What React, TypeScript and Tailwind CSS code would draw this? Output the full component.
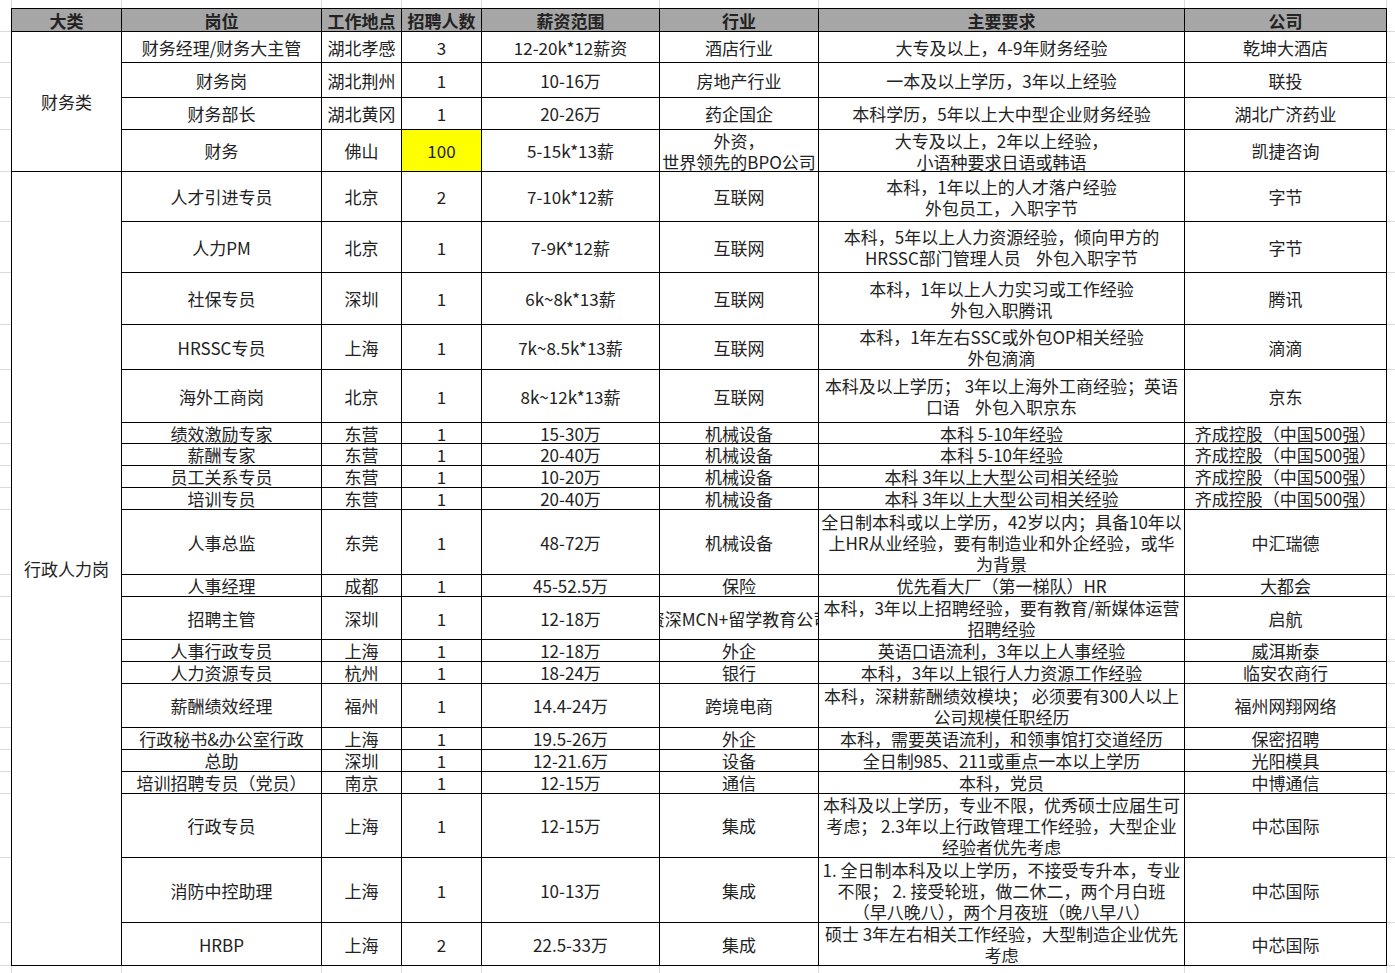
import clsx from 'clsx'

type Row = {
    pos: string
    city: string
    num: string
    pay: string
    ind: string
    req: string
    co: string
    hl?: boolean
}

// row heights of the sheet (header + 25 data rows)
const ROWS_TPL =
    'grid-rows-[22px_30px_34px_31px_41px_49px_50px_51px_44px_52px_20px_21px_21px_21px_64px_21px_42px_21px_21px_43px_21px_21px_21px_63px_64px_42px]'

const HEAD = ['大类', '岗位', '工作地点', '招聘人数', '薪资范围', '行业', '主要要求', '公司']

const FINANCE: Row[] = [
    { pos: '财务经理/财务大主管', city: '湖北孝感', num: '3', pay: '12-20k*12薪资', ind: '酒店行业', req: '大专及以上，4-9年财务经验', co: '乾坤大酒店' },
    { pos: '财务岗', city: '湖北荆州', num: '1', pay: '10-16万', ind: '房地产行业', req: '一本及以上学历，3年以上经验', co: '联投' },
    { pos: '财务部长', city: '湖北黄冈', num: '1', pay: '20-26万', ind: '药企国企', req: '本科学历，5年以上大中型企业财务经验', co: '湖北广济药业' },
    { pos: '财务', city: '佛山', num: '100', pay: '5-15k*13薪', ind: '外资，\n世界领先的BPO公司', req: '大专及以上，2年以上经验，\n小语种要求日语或韩语', co: '凯捷咨询', hl: true },
]

const HR: Row[] = [
    { pos: '人才引进专员', city: '北京', num: '2', pay: '7-10k*12薪', ind: '互联网', req: '本科，1年以上的人才落户经验\n外包员工，入职字节', co: '字节' },
    { pos: '人力PM', city: '北京', num: '1', pay: '7-9K*12薪', ind: '互联网', req: '本科，5年以上人力资源经验，倾向甲方的\nHRSSC部门管理人员    外包入职字节', co: '字节' },
    { pos: '社保专员', city: '深圳', num: '1', pay: '6k~8k*13薪', ind: '互联网', req: '本科，1年以上人力实习或工作经验\n外包入职腾讯', co: '腾讯' },
    { pos: 'HRSSC专员', city: '上海', num: '1', pay: '7k~8.5k*13薪', ind: '互联网', req: '本科，1年左右SSC或外包OP相关经验\n外包滴滴', co: '滴滴' },
    { pos: '海外工商岗', city: '北京', num: '1', pay: '8k~12k*13薪', ind: '互联网', req: '本科及以上学历； 3年以上海外工商经验；英语\n口语    外包入职京东', co: '京东' },
    { pos: '绩效激励专家', city: '东营', num: '1', pay: '15-30万', ind: '机械设备', req: '本科 5-10年经验', co: '齐成控股（中国500强）' },
    { pos: '薪酬专家', city: '东营', num: '1', pay: '20-40万', ind: '机械设备', req: '本科 5-10年经验', co: '齐成控股（中国500强）' },
    { pos: '员工关系专员', city: '东营', num: '1', pay: '10-20万', ind: '机械设备', req: '本科 3年以上大型公司相关经验', co: '齐成控股（中国500强）' },
    { pos: '培训专员', city: '东营', num: '1', pay: '20-40万', ind: '机械设备', req: '本科 3年以上大型公司相关经验', co: '齐成控股（中国500强）' },
    { pos: '人事总监', city: '东莞', num: '1', pay: '48-72万', ind: '机械设备', req: '全日制本科或以上学历，42岁以内；具备10年以\n上HR从业经验，要有制造业和外企经验，或华\n为背景', co: '中汇瑞德' },
    { pos: '人事经理', city: '成都', num: '1', pay: '45-52.5万', ind: '保险', req: '优先看大厂（第一梯队）HR', co: '大都会' },
    { pos: '招聘主管', city: '深圳', num: '1', pay: '12-18万', ind: '资深MCN+留学教育公司', req: '本科，3年以上招聘经验，要有教育/新媒体运营\n招聘经验', co: '启航' },
    { pos: '人事行政专员', city: '上海', num: '1', pay: '12-18万', ind: '外企', req: '英语口语流利，3年以上人事经验', co: '威洱斯泰' },
    { pos: '人力资源专员', city: '杭州', num: '1', pay: '18-24万', ind: '银行', req: '本科，3年以上银行人力资源工作经验', co: '临安农商行' },
    { pos: '薪酬绩效经理', city: '福州', num: '1', pay: '14.4-24万', ind: '跨境电商', req: '本科，深耕薪酬绩效模块； 必须要有300人以上\n公司规模任职经历', co: '福州网翔网络' },
    { pos: '行政秘书&办公室行政', city: '上海', num: '1', pay: '19.5-26万', ind: '外企', req: '本科，需要英语流利，和领事馆打交道经历', co: '保密招聘' },
    { pos: '总助', city: '深圳', num: '1', pay: '12-21.6万', ind: '设备', req: '全日制985、211或重点一本以上学历', co: '光阳模具' },
    { pos: '培训招聘专员（党员）', city: '南京', num: '1', pay: '12-15万', ind: '通信', req: '本科，党员', co: '中博通信' },
    { pos: '行政专员', city: '上海', num: '1', pay: '12-15万', ind: '集成', req: '本科及以上学历，专业不限，优秀硕士应届生可\n考虑； 2.3年以上行政管理工作经验，大型企业\n经验者优先考虑', co: '中芯国际' },
    { pos: '消防中控助理', city: '上海', num: '1', pay: '10-13万', ind: '集成', req: '1. 全日制本科及以上学历，不接受专升本，专业\n不限； 2. 接受轮班，做二休二，两个月白班\n（早八晚八），两个月夜班（晚八早八）', co: '中芯国际' },
    { pos: 'HRBP', city: '上海', num: '2', pay: '22.5-33万', ind: '集成', req: '硕士 3年左右相关工作经验，大型制造企业优先\n考虑', co: '中芯国际' },
]

const STRIP_COLS = ['w-[110px]', 'w-[200px]', 'w-[80px]', 'w-[80px]', 'w-[178px]', 'w-[159px]', 'w-[366px]', 'w-[202px]']

function Cell({ text, className, yellow }: { text: string; className?: string; yellow?: boolean }) {
    return (
        <div
            className={clsx(
                'flex items-center justify-center overflow-hidden text-center',
                yellow ? 'bg-[#ffff00]' : 'bg-white',
                className
            )}
        >
            <div className="shrink-0 whitespace-pre leading-[21px]">
                {text.split('\n').map((line, i) => (
                    <div key={i}>{line}</div>
                ))}
            </div>
        </div>
    )
}

function RowCells({ row }: { row: Row }) {
    return (
        <>
            <Cell text={row.pos} className="col-start-2" />
            <Cell text={row.city} />
            <Cell text={row.num} yellow={row.hl} />
            <Cell text={row.pay} />
            <Cell text={row.ind} />
            <Cell text={row.req} />
            <Cell text={row.co} />
        </>
    )
}

// light sheet grid outside the bordered table
function ColStrip({ className }: { className?: string }) {
    return (
        <div className={clsx('flex', className)}>
            <div className="w-[11px] shrink-0" />
            {STRIP_COLS.map((w, i) => (
                <div key={i} className={clsx(w, 'shrink-0 border-l border-[#dadada]')} />
            ))}
            <div className="flex-1 border-l border-[#dadada]" />
        </div>
    )
}

function RowStrip({ className }: { className?: string }) {
    return (
        <div className={clsx('flex flex-col', className)}>
            <div className="h-px bg-white" />
            <div className={clsx('grid gap-px bg-[#dadada]', ROWS_TPL)}>
                {Array.from({ length: 26 }).map((_, i) => (
                    <div key={i} className="bg-white" />
                ))}
            </div>
            <div className="h-px bg-[#dadada]" />
        </div>
    )
}

export default function App() {
    return (
        <div className="flex h-[973px] w-[1395px] flex-col overflow-hidden bg-white font-['Noto_Sans_CJK_SC','Microsoft_YaHei',sans-serif] text-[17px] text-[#222]">
            <ColStrip className="h-[8px]" />

            <div className="flex">
                <RowStrip className="w-[11px] shrink-0" />

                <div
                    className={clsx(
                        'grid shrink-0 grid-cols-[109px_199px_79px_79px_177px_158px_365px_201px] gap-px border border-black bg-black',
                        ROWS_TPL
                    )}
                >
                    {HEAD.map((h) => (
                        <div key={h} className="flex items-center justify-center overflow-hidden bg-[#a6a6a6] font-bold leading-[21px]">
                            {h}
                        </div>
                    ))}

                    <Cell text="财务类" className="row-[span_4/span_4]" />
                    {FINANCE.map((r, i) => (
                        <RowCells key={i} row={r} />
                    ))}

                    <Cell text="行政人力岗" className="row-[span_21/span_21]" />
                    {HR.map((r, i) => (
                        <RowCells key={i} row={r} />
                    ))}
                </div>

                <RowStrip className="flex-1" />
            </div>

            <ColStrip className="flex-1" />
        </div>
    )
}
